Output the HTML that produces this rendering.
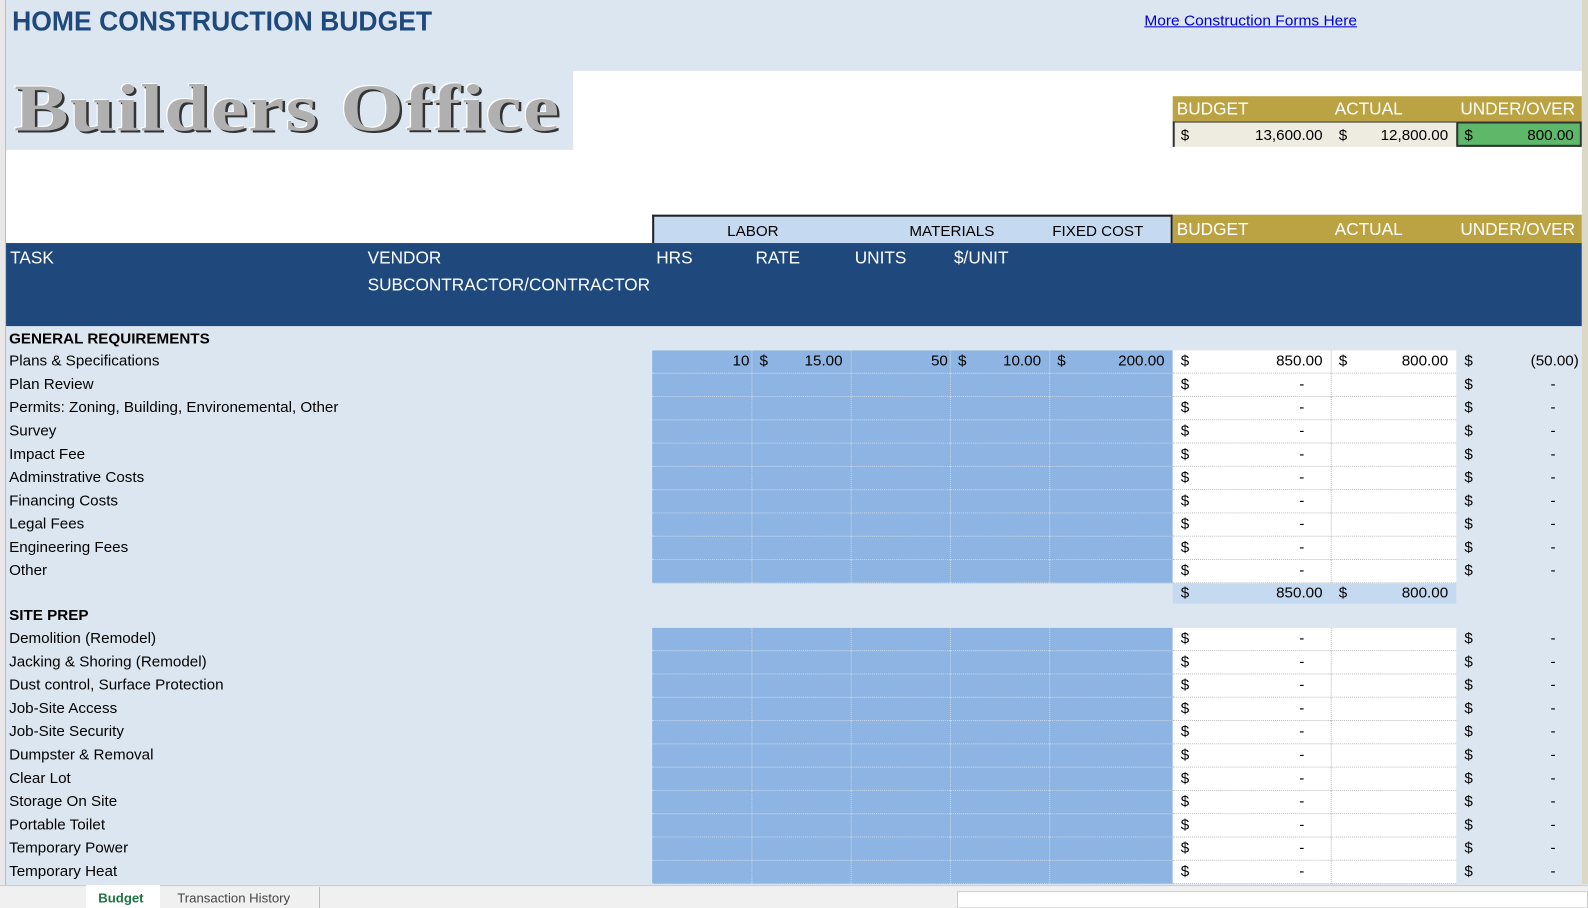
<!DOCTYPE html>
<html><head><meta charset="utf-8"><style>
*{margin:0;padding:0;box-sizing:border-box}
body{width:1588px;height:897px;overflow:hidden;background:#dce6f1;font-family:"Liberation Sans",sans-serif;font-size:15px;color:#000;position:relative}
#wr{position:absolute;left:0;top:0;width:1568px;height:886px;transform:scale(1.0127);transform-origin:0 0}
.a{position:absolute;white-space:nowrap}
.w{background:#fff}
.gold{background:#bba343;color:#fff;font-size:17px}
.hd{color:#fff;font-size:17px}
.blue{background:#8db4e2}
.r{text-align:right}
</style></head><body><div id="wr">
<div class="a" style="left:0;top:0;width:6px;height:874px;background:#e8e8e8;border-right:1px solid #bbb"></div>
<div class="a" style="left:12px;top:6px;font-size:27px;font-weight:bold;color:#1f497d;transform:scaleX(0.97);transform-origin:left">HOME CONSTRUCTION BUDGET</div>
<div class="a" style="left:1130px;top:12px;font-size:15px;color:#0000cc;text-decoration:underline;transform:scaleX(1.02);transform-origin:left">More Construction Forms Here</div>
<div class="a w" style="left:566px;top:70px;width:996px;height:142px"></div>
<div class="a w" style="left:6px;top:148px;width:638px;height:92px"></div>
<div class="a" style="left:14px;top:70px;font-family:'Liberation Serif',serif;font-weight:bold;font-size:66px;color:#b0b0b0;text-shadow:2px 2px 0 #333,-1px -1px 0 #fff;letter-spacing:1px;transform:scaleX(1.22);transform-origin:left">Builders Office</div>
<div class="a gold" style="left:1158px;top:95px;width:404px;height:25px"></div>
<div class="a hd" style="left:1162px;top:98px">BUDGET</div>
<div class="a hd" style="left:1318px;top:98px">ACTUAL</div>
<div class="a hd" style="left:1442px;top:98px">UNDER/OVER</div>
<div class="a" style="left:1158px;top:120px;width:280px;height:25px;background:#eeece1;border-left:2px solid #333;border-top:1px solid #333"></div>
<div class="a" style="left:1438px;top:120px;width:124px;height:25px;background:#5eb86a;border:2px solid #333"></div>
<div class="a" style="left:1166px;top:125px">$</div><div class="a r" style="left:1200px;width:106px;top:125px">13,600.00</div>
<div class="a" style="left:1322px;top:125px">$</div><div class="a r" style="left:1340px;width:90px;top:125px">12,800.00</div>
<div class="a" style="left:1446px;top:125px">$</div><div class="a r" style="left:1460px;width:94px;top:125px">800.00</div>
<div class="a" style="left:644px;top:212px;width:514px;height:28px;background:#c5d9f1;border:2px solid #222;border-bottom:none"></div>
<div class="a" style="left:718px;top:220px;font-size:15px">LABOR</div>
<div class="a" style="left:898px;top:220px;font-size:15px">MATERIALS</div>
<div class="a" style="left:1039px;top:220px;font-size:15px">FIXED COST</div>
<div class="a gold" style="left:1158px;top:212px;width:404px;height:28px"></div>
<div class="a hd" style="left:1162px;top:217px">BUDGET</div>
<div class="a hd" style="left:1318px;top:217px">ACTUAL</div>
<div class="a hd" style="left:1442px;top:217px">UNDER/OVER</div>
<div class="a" style="left:6px;top:240px;width:1556px;height:82px;background:#1f497d"></div>
<div class="a hd" style="left:10px;top:245px">TASK</div>
<div class="a hd" style="left:363px;top:245px">VENDOR</div>
<div class="a hd" style="left:363px;top:272px">SUBCONTRACTOR/CONTRACTOR</div>
<div class="a hd" style="left:648px;top:245px">HRS</div>
<div class="a hd" style="left:746px;top:245px">RATE</div>
<div class="a hd" style="left:844px;top:245px">UNITS</div>
<div class="a hd" style="left:942px;top:245px">$/UNIT</div>
<div class="a" style="left:1562px;top:0;width:8px;height:874px;background:#dce6f1"></div>
<div id="rows"></div>
<script>
var g=["Plans & Specifications","Plan Review","Permits: Zoning, Building, Environemental, Other","Survey","Impact Fee","Adminstrative Costs","Financing Costs","Legal Fees","Engineering Fees","Other"];
var s=["Demolition (Remodel)","Jacking & Shoring (Remodel)","Dust control, Surface Protection","Job-Site Access","Job-Site Security","Dumpster & Removal","Clear Lot","Storage On Site","Portable Toilet","Temporary Power","Temporary Heat"];
var h="";function t(x,y,txt,extra){h+='<div class="a" style="left:'+x+'px;top:'+y+'px;'+(extra||'')+'">'+txt+'</div>';}
function row(y,name,first){
 h+='<div class="a blue" style="left:644px;top:'+y+'px;width:514px;height:23px;border-bottom:1px dotted #c8d8ec"></div>';
 [742,840,938,1036].forEach(function(x){h+='<div class="a" style="left:'+x+'px;top:'+y+'px;width:0;height:23px;border-left:1px dotted #c8d8ec"></div>'});
 h+='<div class="a w" style="left:1158px;top:'+y+'px;width:280px;height:23px;border-bottom:1px dotted #bbb"></div>';
 h+='<div class="a" style="left:1314px;top:'+y+'px;width:0;height:23px;border-left:1px dotted #bbb"></div>';
 t(9,y+2,name.replace('&','&amp;'));
 t(1166,y+2,'$');t(1446,y+2,'$');
 if(first){t(644,y+2,'10','width:96px;text-align:right');t(750,y+2,'$');t(742,y+2,'15.00','width:90px;text-align:right');
  t(840,y+2,'50','width:96px;text-align:right');t(946,y+2,'$');t(938,y+2,'10.00','width:90px;text-align:right');
  t(1044,y+2,'$');t(1036,y+2,'200.00','width:114px;text-align:right');
  t(1158,y+2,'850.00','width:148px;text-align:right');t(1322,y+2,'$');t(1314,y+2,'800.00','width:116px;text-align:right');
  t(1438,y+2,'(50.00)','width:121px;text-align:right');}
 else{t(1158,y+2,'-','width:130px;text-align:right');t(1438,y+2,'-','width:98px;text-align:right');}
}
t(9,326,'GENERAL REQUIREMENTS','font-weight:bold');
g.forEach(function(n,i){row(346+i*23,n,i==0)});
h+='<div class="a" style="left:1158px;top:576px;width:280px;height:20px;background:#c5d9f1"></div>';
t(1166,577,'$');t(1158,577,'850.00','width:148px;text-align:right');t(1322,577,'$');t(1314,577,'800.00','width:116px;text-align:right');
t(9,599,'SITE PREP','font-weight:bold');
s.forEach(function(n,i){row(620+i*23,n,false)});
document.getElementById('rows').innerHTML=h;
</script>
<div class="a" style="left:0;top:874px;width:1568px;height:23px;background:#f0f0f0;border-top:1px solid #ccc"></div>
<div class="a" style="left:85px;top:874px;width:73px;height:23px;background:#fff;color:#217346;font-weight:bold;font-size:13px;padding:5px 0 0 12px">Budget</div>
<div class="a" style="left:175px;top:879px;font-size:13px;color:#444">Transaction History</div>
<div class="a" style="left:315px;top:876px;height:21px;border-left:1px solid #bbb"></div>
<div class="a" style="left:945px;top:880px;width:623px;height:17px;background:#fff;border:1px solid #ccc"></div>
</div>
<div class="a" style="left:1582px;top:0;width:6px;height:884px;background:#dcd8c8"></div>
</body></html>
